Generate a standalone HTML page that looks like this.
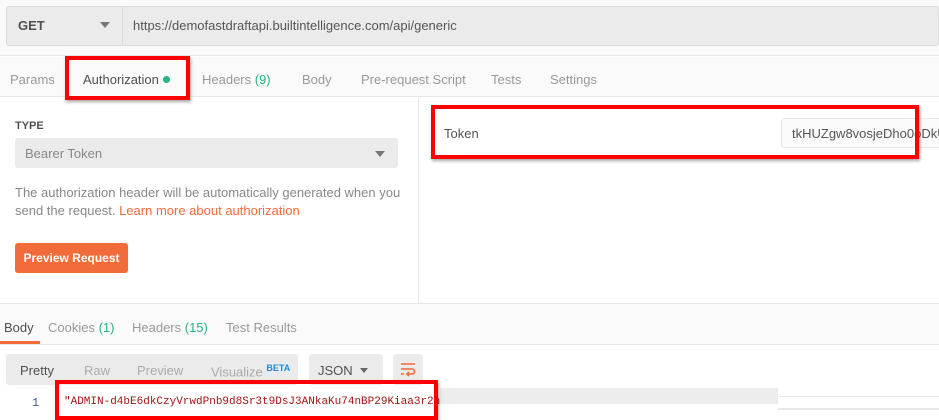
<!DOCTYPE html>
<html><head><style>
*{box-sizing:border-box;margin:0;padding:0}
body{width:939px;height:416px;overflow:hidden;background:#fff;font-family:"Liberation Sans","DejaVu Sans",sans-serif;font-size:13px;color:#505050;position:relative}
.a{position:absolute;white-space:nowrap}
.red{position:absolute;border:4px solid #f00;box-shadow:1px 2px 3px rgba(0,0,0,.35)}
</style></head><body>
<div class="a" style="left:0;top:0;width:939px;height:56px;background:#fafafa;border-bottom:1px solid #e8e8e8"></div>
<div class="a" style="left:6px;top:6px;width:933px;height:40px;background:#ebebeb;border:1px solid #dcdcdc;border-radius:3px"></div>
<div class="a" style="left:122px;top:7px;width:1px;height:38px;background:#dcdcdc"></div>
<div class="a" style="left:18px;top:18px;font-weight:bold;color:#505050">GET</div>
<div class="a" style="left:100px;top:22px;width:0;height:0;border-left:5px solid transparent;border-right:5px solid transparent;border-top:6px solid #777"></div>
<div class="a" style="left:133px;top:18px;color:#555">https://demofastdraftapi.builtintelligence.com/api/generic</div>
<div class="a" style="left:0;top:57px;width:939px;height:40px;background:#fafafa;border-bottom:1px solid #e8e8e8"></div>
<div class="a" style="left:10px;top:72px;color:#999">Params</div>
<div class="a" style="left:83px;top:72px;color:#505050">Authorization</div>
<div class="a" style="left:163px;top:76px;width:7px;height:7px;border-radius:50%;background:#26b47f"></div>
<div class="a" style="left:202px;top:72px;color:#999">Headers <span style="color:#26b47f">(9)</span></div>
<div class="a" style="left:302px;top:72px;color:#999">Body</div>
<div class="a" style="left:361px;top:72px;color:#999">Pre-request Script</div>
<div class="a" style="left:491px;top:72px;color:#999">Tests</div>
<div class="a" style="left:550px;top:72px;color:#999">Settings</div>
<div class="red" style="left:65px;top:56px;width:125px;height:44px"></div>
<div class="a" style="left:418px;top:98px;width:1px;height:205px;background:#e8e8e8"></div>
<div class="a" style="left:15px;top:120px;font-size:11px;font-weight:bold;color:#505050">TYPE</div>
<div class="a" style="left:15px;top:138px;width:383px;height:30px;background:#ebebeb;border-radius:3px"></div>
<div class="a" style="left:25px;top:146px;color:#888">Bearer Token</div>
<div class="a" style="left:375px;top:151px;border-left:5px solid transparent;border-right:5px solid transparent;border-top:6px solid #777"></div>
<div class="a" style="left:15px;top:184px;color:#888;line-height:18px">The authorization header will be automatically generated when you<br>send the request. <span style="color:#f26b3a">Learn more about authorization</span></div>
<div class="a" style="left:15px;top:243px;width:113px;height:30px;background:#f26b3a;border-radius:3px;color:#fff;font-weight:bold;font-size:12px;line-height:30px;text-align:center">Preview Request</div>
<div class="a" style="left:444px;top:126px;color:#555">Token</div>
<div class="a" style="left:781px;top:118px;width:170px;height:30px;background:#fafafa;border:1px solid #e8e8e8;border-radius:3px"></div>
<div class="a" style="left:792px;top:126px;color:#555">tkHUZgw8vosjeDho0oDkU</div>
<div class="red" style="left:431px;top:105px;width:488px;height:54px"></div>
<div class="a" style="left:0;top:303px;width:939px;height:42px;background:#fafafa;border-top:1px solid #e8e8e8;border-bottom:1px solid #e8e8e8"></div>
<div class="a" style="left:4px;top:320px;color:#505050">Body</div>
<div class="a" style="left:0;top:341px;width:40px;height:3px;background:#f26b3a"></div>
<div class="a" style="left:48px;top:320px;color:#999">Cookies <span style="color:#26b47f">(1)</span></div>
<div class="a" style="left:132px;top:320px;color:#999">Headers <span style="color:#26b47f">(15)</span></div>
<div class="a" style="left:226px;top:320px;color:#999">Test Results</div>
<div class="a" style="left:6px;top:354px;width:292px;height:31px;background:#ebebeb;border-radius:3px"></div>
<div class="a" style="left:20px;top:363px;color:#505050">Pretty</div>
<div class="a" style="left:84px;top:363px;color:#aaa">Raw</div>
<div class="a" style="left:137px;top:363px;color:#aaa">Preview</div>
<div class="a" style="left:211px;top:363px;color:#aaa">Visualize <sup style="color:#1c8ce0;font-size:9px;font-weight:bold">BETA</sup></div>
<div class="a" style="left:309px;top:354px;width:74px;height:31px;background:#ebebeb;border-radius:3px"></div>
<div class="a" style="left:318px;top:363px;color:#505050">JSON</div>
<div class="a" style="left:360px;top:368px;border-left:4px solid transparent;border-right:4px solid transparent;border-top:5px solid #666"></div>
<div class="a" style="left:393px;top:354px;width:30px;height:31px;background:#ebebeb;border-radius:3px"></div>
<svg class="a" style="left:399px;top:360px" width="18" height="18" viewBox="0 0 18 18" fill="none" stroke="#f26b3a" stroke-width="1.6"><path d="M2 4h14M2 9h11a2.5 2.5 0 0 1 0 5H8M10 12l-2 2 2 2M2 14h3"/></svg>
<div class="a" style="left:440px;top:388px;width:338px;height:16px;background:#ededed"></div>
<div class="a" style="left:778px;top:396px;width:161px;height:1px;background:#e8e8e8"></div>
<div class="a" style="left:778px;top:408px;width:161px;height:2px;background:#e8e8e8"></div>
<div class="a" style="left:32px;top:396px;color:#3a5a90;font-family:'Liberation Mono',monospace;font-size:12px">1</div>
<div class="a" style="left:64px;top:396px;color:#a31515;font-family:'Liberation Mono',monospace;font-size:11px">"ADMIN-d4bE6dkCzyVrwdPnb9d8Sr3t9DsJ3ANkaKu74nBP29Kiaa3r2h</div>
<div class="red" style="left:55px;top:380px;width:383px;height:40px"></div>
</body></html>
